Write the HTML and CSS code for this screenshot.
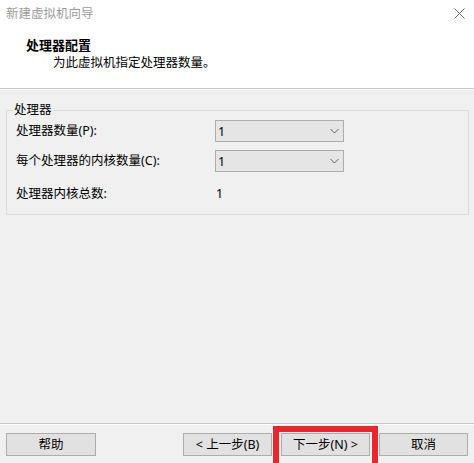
FILE: index.html
```html
<!DOCTYPE html>
<html lang="zh-CN">
<head>
<meta charset="utf-8">
<title>新建虚拟机向导</title>
<link rel="stylesheet" href="styles.css">
</head>
<body>
<div class="dialog">
  <div class="titlebar">
    <span class="title">新建虚拟机向导</span>
    <svg class="close" width="11" height="11" viewBox="0 0 11 11"><path d="M0.5 0.5 L10.5 10.5 M10.5 0.5 L0.5 10.5" stroke="#6e6e6e" stroke-width="1" fill="none"/></svg>
  </div>
  <div class="header">
    <div class="h-title">处理器配置</div>
    <div class="h-sub">为此虚拟机指定处理器数量。</div>
  </div>
  <div class="main">
    <fieldset class="group">
      <legend class="legend">处理器</legend>
      <div class="grid">
        <div class="label">处理器数量(P):</div>
        <div class="combo"><span>1</span><svg class="chev" width="9" height="6" viewBox="0 0 9 6"><path d="M0.5 1 L4.5 5 L8.5 1" stroke="#606060" stroke-width="1" fill="none"/></svg></div>
        <div class="label">每个处理器的内核数量(C):</div>
        <div class="combo"><span>1</span><svg class="chev" width="9" height="6" viewBox="0 0 9 6"><path d="M0.5 1 L4.5 5 L8.5 1" stroke="#606060" stroke-width="1" fill="none"/></svg></div>
        <div class="label total">处理器内核总数:</div>
        <div class="value">1</div>
      </div>
    </fieldset>
  </div>
  <div class="footer">
    <button class="btn">帮助</button>
    <div class="spacer"></div>
    <button class="btn">&lt; 上一步(B)</button>
    <span class="highlight"><button class="btn">下一步(N) &gt;</button></span>
    <button class="btn">取消</button>
  </div>
</div>
</body>
</html>
```
FILE: styles.css
```css
html, body {
  margin: 0;
  padding: 0;
  width: 474px;
  height: 463px;
  overflow: hidden;
  background: #f0f0f0;
}
body {
  font-family: "Noto Sans", "Noto Sans CJK SC", sans-serif;
  font-size: 12.5px;
  color: #000;
}
.dialog {
  display: flex;
  flex-direction: column;
  height: 463px;
}
.titlebar {
  height: 28px;
  background: #fff;
  display: flex;
  align-items: center;
  justify-content: space-between;
  padding: 0 9px 0 6px;
}
.title {
  color: #9a9a9a;
  line-height: 18px;
  margin-top: -1px;
}
.close {
  display: block;
  margin-top: -1px;
}
.header {
  background: #fff;
  height: 61px;
  box-sizing: border-box;
  padding-top: 8px;
  border-bottom: 1px solid #c8c8c8;
}
.h-title {
  font-weight: bold;
  line-height: 18px;
  padding-left: 26px;
  font-size: 13px;
}
.h-sub {
  line-height: 18px;
  padding-left: 53px;
}
.main {
  flex: 1;
  padding: 12px 5px 0 6px;
  box-shadow: inset 0 1px 0 #fff;
}
.group {
  margin: 0;
  padding: 0 0 12px 0;
  border: 1px solid #dcdcdc;
}
.legend {
  margin-left: 6px;
  padding: 0 1px;
  line-height: 18px;
}
.grid {
  display: grid;
  grid-template-columns: 199px 129px;
  grid-auto-rows: 22px;
  row-gap: 8px;
  padding-left: 9px;
  padding-top: 1px;
  align-items: center;
}
.label, .value {
  line-height: 22px;
}
.value {
  padding-left: 1px;
}
.total, .value {
  margin-top: 5px;
}
.combo {
  height: 22px;
  box-sizing: border-box;
  background: #e5e5e5;
  border: 1px solid #adadad;
  display: flex;
  align-items: center;
  justify-content: space-between;
  padding: 0 4px 0 2px;
}
.chev {
  display: block;
}
.footer {
  border-top: 1px solid #c8c8c8;
  box-shadow: inset 0 1px 0 #fff;
  height: 40px;
  box-sizing: border-box;
  padding: 9px 6px 0 6px;
  display: flex;
  align-items: flex-start;
  gap: 9px;
}
.spacer {
  flex: 1;
}
.btn {
  width: 89px;
  height: 23px;
  box-sizing: border-box;
  margin: 0;
  padding: 0;
  background: #e1e1e1;
  border: 1px solid #adadad;
  font-family: inherit;
  font-size: 12.5px;
  color: #000;
  line-height: 20px;
}
.footer > .btn:first-child {
  width: 90px;
}
.highlight {
  position: relative;
  display: block;
}
.highlight .btn {
  display: block;
}
.highlight::after {
  content: "";
  position: absolute;
  left: -8px;
  right: -8px;
  top: -7px;
  bottom: -14px;
  border: 6px solid #e8262b;
  pointer-events: none;
}
```
